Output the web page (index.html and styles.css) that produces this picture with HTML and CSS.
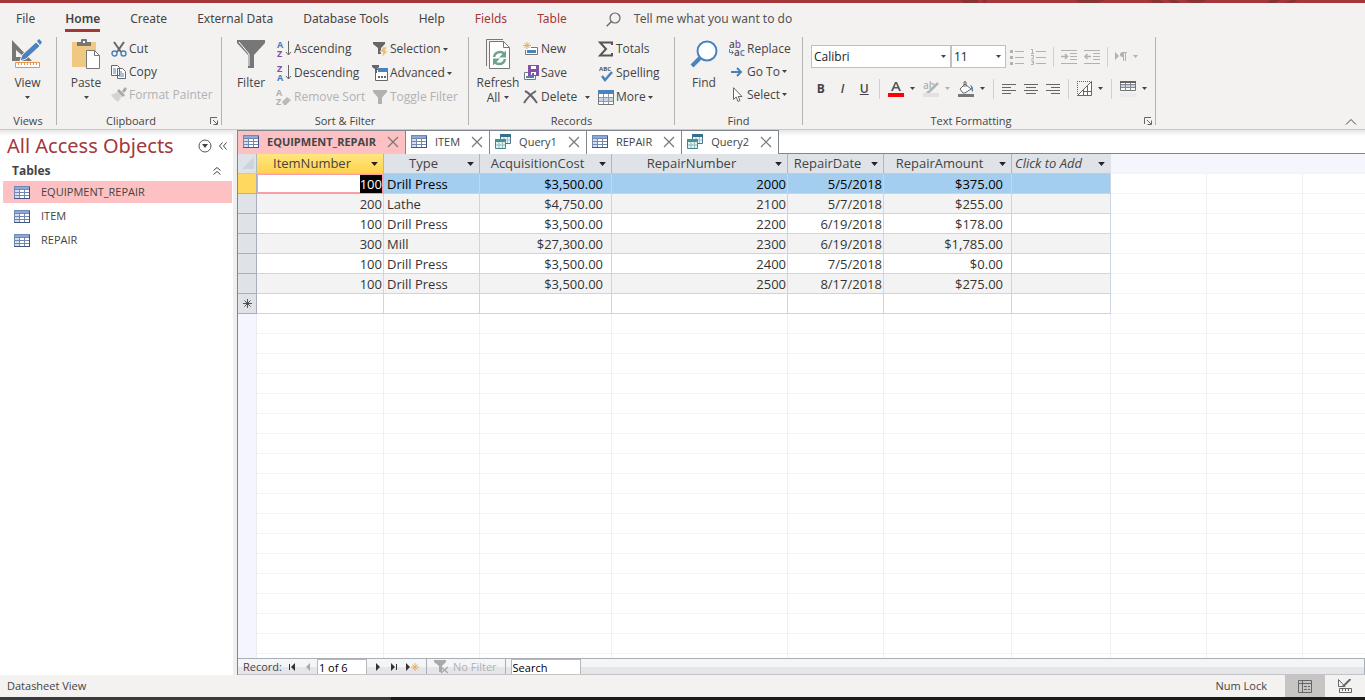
FILE: index.html
```html
<!DOCTYPE html>
<html lang="en">
<head>
    <meta charset="UTF-8">
    <meta name="viewport" content="width=device-width, initial-scale=1.0">
    <title>EQUIPMENT_REPAIR</title>
    <link rel="stylesheet" href="styles.css">
</head>
<body>
    <!-- Shared icons -->
    <svg class="sprite" aria-hidden="true">
        <symbol id="caret" viewBox="0 0 5 3"><path d="M0 0h5L2.500 3z" fill="currentColor"/></symbol>
        <symbol id="close" viewBox="0 0 12 12"><path d="M1 1l10 10M11 1L1 11" stroke="#777" stroke-width="1.200" fill="none"/></symbol>
        <symbol id="launcher" viewBox="0 0 8 8"><path d="M.5 7V.5H7M3 3l4 4M7.500 3.500v4h-4" stroke="#666" fill="none"/></symbol>
        <symbol id="sheet" viewBox="0 0 16 13">
            <path d="M0 0h16v13H0z" fill="#7288b3"/>
            <path d="M1 1h14v2H1z" fill="#8ea8da"/>
            <path d="M1 4h4v2H1zM1 7h4v2H1zM1 10h4v2H1z" fill="#d3def2"/>
            <path d="M6 4h4v2H6zM11 4h4v2h-4zM6 7h4v2H6zM11 7h4v2h-4zM6 10h4v2H6zM11 10h4v2h-4z" fill="#fff"/>
            <path d="M0 12.500h16M15.500 1v12" stroke="#3f5680"/>
        </symbol>
        <symbol id="query" viewBox="0 0 16 15">
            <path d="M5.500.5h10v9h-10z" fill="#eef6f8" stroke="#4b7590"/>
            <path d="M5 0h11v3H5z" fill="#39708b"/>
            <path d="M9 3v6M12.500 3v6M6 6h9" stroke="#a8c3cf"/>
            <path d="M.5 5.500h10v9H.5z" fill="#e3f1f0" stroke="#4b8290"/>
            <path d="M0 5h11v3H0z" fill="#4a9292"/>
            <path d="M4 8v6M7.500 8v6M1 11h9" stroke="#8dbdbd"/>
        </symbol>
        <symbol id="funnel" viewBox="0 0 14 14"><path d="M0 0h14v2L9 7.500V14H5V7.500L0 2z" fill="currentColor"/></symbol>
    </svg>

    <div class="title-strip">
        <svg width="470" height="3" viewBox="0 0 470 3"><path d="M0 0h12l4 3H4zM95 0h18v3H99zM118 0h3v3h-3zM210 0h30l-8 3h-16zM285 0h10l4 3h-10zM303 0h8l4 3h-8zM320 0h22l-6 3h-10zM405 0h10l-5 3h-8zM425 0h8l-5 3h-8z" transform="translate(-30)" fill="#883336"/></svg>
    </div>

    <header class="ribbon">
        <nav class="ribbon-tabs">
            <a href="#">File</a>
            <a href="#" class="selected">Home</a>
            <a href="#">Create</a>
            <a href="#">External Data</a>
            <a href="#">Database Tools</a>
            <a href="#">Help</a>
            <a href="#" class="context">Fields</a>
            <a href="#" class="context">Table</a>
            <button class="tell-me">
                <svg width="15" height="15" viewBox="0 0 15 15"><circle cx="9" cy="6" r="5" fill="none" stroke="#666" stroke-width="1.200"/><path d="M5.500 9.500L.7 14.300" stroke="#666" stroke-width="1.400"/></svg>
                Tell me what you want to do
            </button>
        </nav>

        <div class="ribbon-groups">
            <section class="group views">
                <div class="group-body">
                    <button class="big">
                        <svg width="31" height="30" viewBox="0 0 31 30">
                            <path d="M0 1v21h20zM4 11l8 7H4z" fill="#777" fill-rule="evenodd"/>
                            <path d="M8 22l2-6L24 3l4 4-14 13z" fill="#4a82bd" stroke="#f3f2f1"/>
                            <path d="M25 2l2-2 3 3-2 3z" fill="#4a82bd"/>
                            <path d="M3.500 23.500h24v5h-24z" fill="#fff" stroke="#e59550"/>
                            <path d="M6.500 24v2M9.500 24v2M12.500 24v2M15.500 24v2M18.500 24v2M21.500 24v2M24.500 24v2" stroke="#e59550"/>
                        </svg>
                        <span>View</span>
                        <svg class="caret"><use href="#caret"/></svg>
                    </button>
                </div>
                <div class="group-name">Views</div>
            </section>

            <section class="group clipboard">
                <div class="group-body">
                    <button class="big">
                        <svg width="28" height="30" viewBox="0 0 28 30">
                            <path d="M0 3h24v25H0z" fill="#efc981"/>
                            <path d="M5 7V3h4V1q0-1 1-1h4q1 0 1 1v2h4v4z" fill="#777"/>
                            <path d="M11 2h2v2h-2z" fill="#fff"/>
                            <path d="M14.500 11.500h8l5 5v13h-13z" fill="#fff" stroke="#777"/>
                            <path d="M22.500 11.500v5h5" fill="none" stroke="#777"/>
                        </svg>
                        <span>Paste</span>
                        <svg class="caret"><use href="#caret"/></svg>
                    </button>
                    <div class="column">
                        <button><svg width="16" height="16" viewBox="0 0 16 16"><path d="M3 1l7 10M13 1L6 11" stroke="#666" stroke-width="2"/><circle cx="3.500" cy="12.500" r="2.500" fill="none" stroke="#4a82bd" stroke-width="1.400"/><circle cx="12.500" cy="12.500" r="2.500" fill="none" stroke="#4a82bd" stroke-width="1.400"/></svg>Cut</button>
                        <button><svg width="16" height="16" viewBox="0 0 16 16"><path d="M.5 1.500h6l2 2v8h-8zM6.500 4.500h5l3 3v7h-8z" fill="#fff" stroke="#666"/><path d="M2 5h3M2 7h3M2 9h3M8 8h3M8 10h5M8 12h5" stroke="#4a82bd"/></svg>Copy</button>
                        <button disabled><svg width="16" height="16" viewBox="0 0 16 16"><path d="M0 8l7-3 4 4-4 6q-4-2-7-7z" fill="#d5d3d3"/><path d="M6 4l2-2 6 6-2 2zM11 4l3-4 2 2-3 4z" fill="#a9a8a8"/></svg>Format Painter</button>
                    </div>
                </div>
                <div class="group-name">Clipboard</div>
                <button class="launcher" aria-label="Clipboard options"><svg width="8" height="8"><use href="#launcher"/></svg></button>
            </section>

            <section class="group sort">
                <div class="group-body">
                    <button class="big">
                        <svg width="28" height="30" viewBox="0 0 28 30"><path d="M0 1h28v3L17 16v13h-6V16L0 4z" fill="#777"/><path d="M2 3l10 12v12" fill="none" stroke="#fff"/></svg>
                        <span>Filter</span>
                    </button>
                    <div class="column">
                        <button><svg width="16" height="18" viewBox="0 0 16 18"><text x="1" y="8" class="az blue">A</text><text x="1" y="17" class="az purple">Z</text><path d="M12.500 1v14M10 12l2.500 3 2.500-3" fill="none" stroke="#666"/></svg>Ascending</button>
                        <button><svg width="16" height="18" viewBox="0 0 16 18"><text x="1" y="8" class="az purple">Z</text><text x="1" y="17" class="az blue">A</text><path d="M12.500 1v14M10 12l2.500 3 2.500-3" fill="none" stroke="#666"/></svg>Descending</button>
                        <button disabled><svg width="16" height="18" viewBox="0 0 16 18"><text x="0" y="8" class="az gray">A</text><text x="0" y="17" class="az gray">Z</text><path d="M6 14l5-5 4 3-5 5H8z" fill="#bbb9bb"/></svg>Remove Sort</button>
                    </div>
                    <div class="column">
                        <button><svg width="16" height="16" viewBox="0 0 16 16"><path d="M1 1h12v2L9 7v6H6V7L1 3z" fill="#666"/><path d="M11 6h4l-2 4h3l-6 6 1-5H8z" fill="#edbd70" stroke="#f3f2f1" stroke-width=".5"/></svg>Selection<svg class="caret"><use href="#caret"/></svg></button>
                        <button><svg width="16" height="16" viewBox="0 0 16 16"><path d="M3.500 4.500h12v11h-12z" fill="#fff" stroke="#666"/><path d="M6 3h10v4H6z" fill="#4a82bd"/><path d="M0 0h7v2L5 4v4H3V4L0 2z" fill="#666"/><path d="M6 11h2v2H6zM9 11h2v2H9zM12 11h2v2h-2z" fill="#666"/></svg>Advanced<svg class="caret"><use href="#caret"/></svg></button>
                        <button disabled><svg width="16" height="14" viewBox="0 0 14 14"><use href="#funnel"/></svg>Toggle Filter</button>
                    </div>
                </div>
                <div class="group-name">Sort &amp; Filter</div>
            </section>

            <section class="group records">
                <div class="group-body">
                    <button class="big">
                        <svg width="24" height="30" viewBox="0 0 24 30">
                            <path d="M.5 27V.5H17" fill="none" stroke="#777"/>
                            <path d="M3.500 2.500h14l6 6v21h-20z" fill="#fff" stroke="#777"/>
                            <path d="M17.500 2.500v6h6" fill="none" stroke="#777"/>
                            <path d="M8 18q1-5 6-5 3 0 4 2M19 20q-1 5-6 5-3 0-4-2" fill="none" stroke="#6fa48c" stroke-width="2.500"/>
                            <path d="M20 11.500v7h-7zM7 26.500v-7h7z" fill="#6fa48c"/>
                        </svg>
                        <span>Refresh</span>
                        <span class="second">All<svg class="caret"><use href="#caret"/></svg></span>
                    </button>
                    <div class="column">
                        <button><svg width="16" height="14" viewBox="0 0 16 14"><path d="M8 5.500h6.500v7H2.500V8" fill="#fff" stroke="#777"/><path d="M4 8h9v3H4z" fill="#4a82bd"/><path d="M4 0v7M0 3.500h8M1.500 1l5 5M6.500 1l-5 5" stroke="#e6ad5c"/></svg>New</button>
                        <button><svg width="16" height="16" viewBox="0 0 16 16"><path d="M1.500 7.500h11v7h-11z" fill="#fff" stroke="#777"/><path d="M3 11h8v2H3z" fill="#4a82bd"/><path d="M5 0h11v11H5z" fill="#8452a5"/><path d="M8 1h5v3H8zM8 7h5v3H8z" fill="#fff"/><path d="M9 8h2v2H9z" fill="#8452a5"/></svg>Save</button>
                        <div class="split">
                            <button><svg width="16" height="14" viewBox="0 0 16 14"><path d="M2 1q6 3 12 12M13 1Q6 5 1 13" stroke="#666" stroke-width="2" fill="none"/></svg>Delete</button>
                            <button aria-label="Delete options"><svg class="caret"><use href="#caret"/></svg></button>
                        </div>
                    </div>
                    <div class="column">
                        <button><svg width="16" height="16" viewBox="0 0 16 16"><path d="M14 4V1.500H2L8 8l-6 6.500h12V12" fill="none" stroke="#555" stroke-width="2"/></svg>Totals</button>
                        <button><svg width="16" height="18" viewBox="0 0 16 18"><text x="1" y="7" class="abc">ABC</text><path d="M4 12l3 4 7-8" fill="none" stroke="#4a82bd" stroke-width="2.500"/></svg>Spelling</button>
                        <button><svg width="16" height="15" viewBox="0 0 16 15"><path d="M.5.5h15v14H.5z" fill="#fff" stroke="#777"/><path d="M0 0h16v4H0z" fill="#4a82bd"/><path d="M1 7h14v4H1z" fill="#c3d5ea"/><path d="M5.500 4v10M10.500 4v10M1 7.500h14M1 11.500h14" stroke="#999"/></svg>More<svg class="caret"><use href="#caret"/></svg></button>
                    </div>
                </div>
                <div class="group-name">Records</div>
            </section>

            <section class="group find">
                <div class="group-body">
                    <button class="big">
                        <svg width="28" height="30" viewBox="0 0 28 30"><circle cx="17" cy="12" r="9.500" fill="#fff" stroke="#4a82bd" stroke-width="2"/><path d="M10 19l-8 8" stroke="#4a82bd" stroke-width="4"/></svg>
                        <span>Find</span>
                    </button>
                    <div class="column">
                        <button><svg width="16" height="18" viewBox="0 0 16 18"><text x="0" y="8" class="ab">a<tspan fill="#8452a5">b</tspan></text><text x="5" y="16" class="ab">a<tspan fill="#4a82bd">c</tspan></text><path d="M.5 9v3.500H4M2.500 10.500l2 2-2 2" fill="none" stroke="#4a82bd"/></svg>Replace</button>
                        <button><svg width="16" height="12" viewBox="0 0 16 12"><path d="M2 6h10M8 2l4 4-4 4" fill="none" stroke="#4a82bd" stroke-width="2"/></svg>Go To<svg class="caret"><use href="#caret"/></svg></button>
                        <button><svg width="16" height="16" viewBox="0 0 16 16"><path d="M4.500.7v11.800l2.700-2.500 1.800 4.500 2-1-1.800-4H13z" fill="#fff" stroke="#666"/></svg>Select<svg class="caret"><use href="#caret"/></svg></button>
                    </div>
                </div>
                <div class="group-name">Find</div>
            </section>

            <section class="group formatting">
                <div class="group-body">
                    <div class="tools">
                        <div class="select-box font-name"><select aria-label="Font"><option>Calibri</option></select><svg class="caret"><use href="#caret"/></svg></div>
                        <div class="select-box font-size"><select aria-label="Font size"><option>11</option></select><svg class="caret"><use href="#caret"/></svg></div>
                        <button class="tool" disabled aria-label="Bullets"><svg width="14" height="16" viewBox="0 0 14 16"><path d="M5 2.500h9M5 8.500h9M5 14.500h9" stroke="currentColor"/><path d="M0 1h3v3H0zM0 7h3v3H0zM0 13h3v3H0z" fill="currentColor"/></svg></button>
                        <button class="tool" disabled aria-label="Numbering"><svg width="15" height="16" viewBox="0 0 15 16"><path d="M5 2.500h10M5 8.500h10M5 14.500h10" stroke="currentColor"/><path d="M0 .5h1.500v3.500M0 4.500h3M0 6.500h2.500v1.500L.5 10H3M0 12h2.500v3.500H0M1 13.500h1.500" fill="none" stroke="currentColor"/></svg></button>
                        <span class="bar"></span>
                        <button class="tool" disabled aria-label="Increase indent"><svg width="16" height="14" viewBox="0 0 16 14"><path d="M0 .5h16M9 3.500h7M9 6.500h7M9 9.500h7M0 13.500h16" stroke="currentColor"/><path d="M0 6.500h6M4 4l2.500 2.500L4 9" fill="none" stroke="currentColor" stroke-width="1.500"/></svg></button>
                        <button class="tool" disabled aria-label="Decrease indent"><svg width="16" height="14" viewBox="0 0 16 14"><path d="M0 .5h16M9 3.500h7M9 6.500h7M9 9.500h7M0 13.500h16" stroke="currentColor"/><path d="M7 6.500H1M3.500 4L1 6.500 3.500 9" fill="none" stroke="currentColor" stroke-width="1.500"/></svg></button>
                        <span class="bar"></span>
                        <button class="tool" disabled aria-label="Text direction"><svg width="12" height="9" viewBox="0 0 12 9"><path d="M0 0l4 4-4 4zM12 0v1h-1v8h-1V1H9v8H8V5Q5 5 5 2.500 5 0 8 0z" fill="currentColor"/></svg><svg class="caret"><use href="#caret"/></svg></button>
                    </div>
                    <div class="tools">
                        <button class="tool letter bold" aria-label="Bold">B</button>
                        <button class="tool letter italic" aria-label="Italic">I</button>
                        <button class="tool letter underline" aria-label="Underline">U</button>
                        <span class="bar"></span>
                        <button class="tool" aria-label="Font color"><svg width="16" height="16" viewBox="0 0 16 16"><path d="M3 10L7 1h2l4 9h-2l-1-2.500H6L5 10zM6.600 6h2.800L8 2.600z" fill="#555" fill-rule="evenodd"/><path d="M0 12h16v4H0z" fill="#f00"/></svg><svg class="caret"><use href="#caret"/></svg></button>
                        <button class="tool" disabled aria-label="Highlight"><svg width="16" height="16" viewBox="0 0 16 16"><text x="0" y="8" class="ab gray">ab</text><path d="M15 2l-8 8-3 2" stroke="#b5b3b5" stroke-width="2.500" fill="none"/><path d="M0 12h16v4H0z" fill="#e2e0e3"/></svg><svg class="caret"><use href="#caret"/></svg></button>
                        <button class="tool" aria-label="Background color"><svg width="16" height="16" viewBox="0 0 16 16"><path d="M2 8l5-5 6 5-6 4H5z" fill="#fff" stroke="#666"/><path d="M6 6V1q1-1 2 0v5" fill="none" stroke="#666"/><path d="M12 4q4 1 3 7-2-1-2-5z" fill="#4a82bd"/><path d="M0 13h16v3H0z" fill="#777"/></svg><svg class="caret"><use href="#caret"/></svg></button>
                        <span class="bar"></span>
                        <button class="tool" aria-label="Align left"><svg width="14" height="12" viewBox="0 0 14 12"><path d="M0 1.500h14M0 4.500h9M0 7.500h14M0 10.500h9" stroke="#666"/></svg></button>
                        <button class="tool" aria-label="Center"><svg width="14" height="12" viewBox="0 0 14 12"><path d="M0 1.500h14M2 4.500h10M0 7.500h14M2 10.500h10" stroke="#666"/></svg></button>
                        <button class="tool" aria-label="Align right"><svg width="14" height="12" viewBox="0 0 14 12"><path d="M0 1.500h14M5 4.500h9M0 7.500h14M5 10.500h9" stroke="#666"/></svg></button>
                        <span class="bar"></span>
                        <button class="tool" aria-label="Gridlines"><svg width="15" height="15" viewBox="0 0 15 15"><path d="M0 .5h15M.5 0v15" stroke="#666" stroke-dasharray="1 1"/><path d="M0 15L15 0v15z" fill="#fff"/><path d="M.5 14.500L14.500.5v14zM10.500 4.500v10M6.500 8.500v6M6 10.500h8" fill="none" stroke="#666"/></svg><svg class="caret"><use href="#caret"/></svg></button>
                        <span class="bar"></span>
                        <button class="tool" aria-label="Alternate row color"><svg width="16" height="16" viewBox="0 0 16 16"><path d="M.5.5h15v9H.5z" fill="#fff" stroke="#777"/><path d="M1 3h14v3H1z" fill="#c3d5ea"/><path d="M5.500 0v9M10.500 0v9M1 3.500h14M1 6.500h14" stroke="#888"/><path d="M0 0h16v2H0z" fill="#666"/><path d="M0 12h16v4H0z" fill="#ebebef"/></svg><svg class="caret"><use href="#caret"/></svg></button>
                    </div>
                </div>
                <div class="group-name">Text Formatting</div>
                <button class="launcher" aria-label="Text formatting options"><svg width="8" height="8"><use href="#launcher"/></svg></button>
            </section>

            <button class="collapse" aria-label="Collapse the ribbon"><svg width="12" height="6" viewBox="0 0 12 6"><path d="M1 5.500l5-5 5 5" fill="none" stroke="#444"/></svg></button>
        </div>
    </header>

    <main class="workspace">
        <!-- Navigation pane -->
        <aside class="nav-pane">
            <div class="nav-head">
                <h1>All Access Objects</h1>
                <button aria-label="Filter objects"><svg width="14" height="14" viewBox="0 0 14 14"><circle cx="7" cy="7" r="6" fill="none" stroke="#555"/><path d="M4 5h6L7 9z" fill="#444"/></svg></button>
                <button aria-label="Close pane"><svg width="8" height="8" viewBox="0 0 8 8"><path d="M3.500.5L.5 4l3 3.500M7.500.5l-3 3.500 3 3.500" fill="none" stroke="#444"/></svg></button>
            </div>
            <button class="nav-group">Tables<svg width="8" height="8" viewBox="0 0 8 8"><path d="M.5 3.500L4 .5l3.500 3M.5 7.500L4 4.500l3.500 3" fill="none" stroke="#444"/></svg></button>
            <a href="#" class="nav-item selected"><svg width="16" height="13"><use href="#sheet"/></svg>EQUIPMENT_REPAIR</a>
            <a href="#" class="nav-item"><svg width="16" height="13"><use href="#sheet"/></svg>ITEM</a>
            <a href="#" class="nav-item"><svg width="16" height="13"><use href="#sheet"/></svg>REPAIR</a>
        </aside>

        <section class="document">
            <div class="doc-tabs">
                <div class="doc-tab active"><a href="#"><svg width="16" height="13"><use href="#sheet"/></svg>EQUIPMENT_REPAIR</a><button aria-label="Close EQUIPMENT_REPAIR"><svg width="12" height="12"><use href="#close"/></svg></button></div>
                <div class="doc-tab"><a href="#"><svg width="16" height="13"><use href="#sheet"/></svg>ITEM</a><button aria-label="Close ITEM"><svg width="12" height="12"><use href="#close"/></svg></button></div>
                <div class="doc-tab"><a href="#"><svg width="16" height="15"><use href="#query"/></svg>Query1</a><button aria-label="Close Query1"><svg width="12" height="12"><use href="#close"/></svg></button></div>
                <div class="doc-tab"><a href="#"><svg width="16" height="13"><use href="#sheet"/></svg>REPAIR</a><button aria-label="Close REPAIR"><svg width="12" height="12"><use href="#close"/></svg></button></div>
                <div class="doc-tab"><a href="#"><svg width="16" height="15"><use href="#query"/></svg>Query2</a><button aria-label="Close Query2"><svg width="12" height="12"><use href="#close"/></svg></button></div>
                <div class="tab-rest"></div>
            </div>

            <div class="datasheet">
                <table>
                    <colgroup>
                        <col class="c-sel"><col class="c-item"><col class="c-type"><col class="c-cost"><col class="c-num"><col class="c-date"><col class="c-amount"><col class="c-add">
                    </colgroup>
                    <thead>
                        <tr>
                            <th class="corner"><svg width="12" height="12" viewBox="0 0 12 12"><path d="M0 12L12 0v12z" fill="#cdd3dc"/></svg></th>
                            <th class="current"><button><span>ItemNumber</span><svg class="drop"><use href="#caret"/></svg></button></th>
                            <th><button><span>Type</span><svg class="drop"><use href="#caret"/></svg></button></th>
                            <th><button><span>AcquisitionCost</span><svg class="drop"><use href="#caret"/></svg></button></th>
                            <th><button><span>RepairNumber</span><svg class="drop"><use href="#caret"/></svg></button></th>
                            <th><button><span>RepairDate</span><svg class="drop"><use href="#caret"/></svg></button></th>
                            <th><button><span>RepairAmount</span><svg class="drop"><use href="#caret"/></svg></button></th>
                            <th class="add"><button><span>Click to Add</span><svg class="drop"><use href="#caret"/></svg></button></th>
                        </tr>
                    </thead>
                    <tbody>
                        <tr class="active"><td class="sel"></td><td class="focus"><mark>100</mark></td><td class="text">Drill Press</td><td class="money">$3,500.00</td><td>2000</td><td>5/5/2018</td><td class="money">$375.00</td><td></td></tr>
                        <tr><td class="sel"></td><td>200</td><td class="text">Lathe</td><td class="money">$4,750.00</td><td>2100</td><td>5/7/2018</td><td class="money">$255.00</td><td></td></tr>
                        <tr><td class="sel"></td><td>100</td><td class="text">Drill Press</td><td class="money">$3,500.00</td><td>2200</td><td>6/19/2018</td><td class="money">$178.00</td><td></td></tr>
                        <tr><td class="sel"></td><td>300</td><td class="text">Mill</td><td class="money">$27,300.00</td><td>2300</td><td>6/19/2018</td><td class="money">$1,785.00</td><td></td></tr>
                        <tr><td class="sel"></td><td>100</td><td class="text">Drill Press</td><td class="money">$3,500.00</td><td>2400</td><td>7/5/2018</td><td class="money">$0.00</td><td></td></tr>
                        <tr><td class="sel"></td><td>100</td><td class="text">Drill Press</td><td class="money">$3,500.00</td><td>2500</td><td>8/17/2018</td><td class="money">$275.00</td><td></td></tr>
                        <tr class="new"><td class="sel"><svg width="9" height="9" viewBox="0 0 9 9"><path d="M4.500 0v9M0 4.500h9M1.500 1.500l6 6M7.500 1.500l-6 6" stroke="#444" stroke-width=".9"/></svg></td><td></td><td></td><td></td><td></td><td></td><td></td><td></td></tr>
                    </tbody>
                </table>
            </div>

            <div class="record-bar">
                <label for="recordNumber">Record:</label>
                <button aria-label="First record"><svg width="8" height="8" viewBox="0 0 8 8"><path d="M0 1h1v6H0zM6 0v8L2 4z" fill="#333"/></svg></button>
                <button aria-label="Previous record"><svg width="8" height="8" viewBox="0 0 8 8"><path d="M6 0v8L2 4z" fill="#aaa"/></svg></button>
                <input type="text" id="recordNumber" class="record-number" value="1 of 6">
                <button aria-label="Next record"><svg width="8" height="8" viewBox="0 0 8 8"><path d="M2 0v8l4-4z" fill="#333"/></svg></button>
                <button aria-label="Last record"><svg width="8" height="8" viewBox="0 0 8 8"><path d="M7 1h1v6H7zM2 0v8l4-4z" fill="#333"/></svg></button>
                <button class="new-record" aria-label="New record"><svg width="13" height="8" viewBox="0 0 13 8"><path d="M0 0v8l4-4z" fill="#333"/><path d="M9 0v8M5 4h8M6.500 1.500l5 5M11.500 1.500l-5 5" stroke="#e6ad5c"/></svg></button>
                <button class="no-filter" disabled><svg width="16" height="15" viewBox="0 0 16 15"><path d="M0 1h12v2L8 7v6H5V7L0 3z" fill="#aaa"/><path d="M7 8l7 6M14 8l-7 6" stroke="#aaa" stroke-width="1.500"/></svg>No Filter</button>
                <input type="text" class="search" value="Search" aria-label="Search records">
            </div>
        </section>
    </main>

    <footer class="status-bar">
        <span>Datasheet View</span>
        <span class="num-lock">Num Lock</span>
        <button class="on" aria-label="Datasheet View"><svg width="14" height="13" viewBox="0 0 14 13"><path d="M.5.5h13v12H.5zM0 3.500h14M4.500 1v11M6 6.500h3M10 6.500h2M6 9.500h3M10 9.500h2" fill="none" stroke="#666"/></svg></button>
        <button aria-label="Design View"><svg width="15" height="14" viewBox="0 0 15 14"><path d="M.5.5v7H7z" fill="none" stroke="#666"/><path d="M5 7.500L12.500 0" stroke="#666" stroke-width="2"/><path d="M1.500 9.500h12v4h-12zM4.500 10v2M7.500 10v2M10.500 10v2" fill="none" stroke="#666"/></svg></button>
    </footer>
    <div class="desktop-edge"></div>
</body>
</html>
```
FILE: styles.css
```css
* {
    box-sizing: border-box;
}

body {
    margin: 0;
    height: 100vh;
    display: flex;
    flex-direction: column;
    overflow: hidden;
    background: #fff;
    color: #444;
    font-family: "Open Sans", "Noto Sans", sans-serif;
    font-size: 12px;
    line-height: 16px;
}

button,
input,
select {
    font: inherit;
    color: inherit;
    margin: 0;
    padding: 0;
    border: none;
    background: none;
}

button {
    display: flex;
    align-items: center;
    white-space: nowrap;
}

button:disabled {
    color: #b1b1b1;
}

a {
    color: inherit;
    text-decoration: none;
}

svg {
    flex: none;
    display: block;
}

.sprite {
    display: none;
}

.caret {
    width: 5px;
    height: 3px;
}

/* Lettering inside icons */
.az,
.ab,
.abc {
    font-size: 9px;
    font-weight: 700;
    fill: #555;
}

.ab {
    font-size: 10px;
    font-weight: 600;
}

.abc {
    font-size: 6px;
}

.blue {
    fill: #4a82bd;
}

.purple {
    fill: #8452a5;
}

.gray {
    fill: #b1b1b1;
}

/* Ribbon */
.title-strip {
    flex: none;
    height: 3px;
    background: #a4373a;
    display: flex;
    justify-content: flex-end;
}

.ribbon {
    flex: none;
    background: #f3f2f1;
    border-bottom: 1px solid #c8c8c8;
}

.ribbon-tabs {
    display: flex;
    align-items: center;
    height: 32px;
    padding-left: 1px;
    font-family: "Noto Sans", "Open Sans", sans-serif;
}

.ribbon-tabs a {
    padding: 5px 0 2px;
    margin: 0 15px;
    border-bottom: 3px solid transparent;
}

.ribbon-tabs .selected {
    font-weight: 600;
    border-color: #a4373a;
}

.ribbon-tabs .context {
    color: #a4373a;
}

.tell-me {
    margin-left: 24px;
    gap: 13px;
    color: #555;
}

.ribbon-groups {
    display: flex;
    height: 94px;
    padding: 2px 0 4px;
}

.group {
    position: relative;
    display: flex;
    flex-direction: column;
    justify-content: space-between;
    border-right: 1px solid #b3b2b1;
}

.group-body {
    display: flex;
}

.group-name {
    text-align: center;
    line-height: 8px;
    font-size: 11px;
}

.clipboard .group-name,
.formatting .group-name {
    padding-right: 16px;
}

.views {
    width: 57px;
}

.clipboard {
    width: 165px;
}

.sort {
    width: 247px;
}

.records {
    width: 206px;
}

.find {
    width: 128px;
}

.formatting {
    width: 353px;
}

.big {
    flex-direction: column;
    width: 58px;
    padding-top: 2px;
    line-height: 15px;
}

.views .big {
    width: 55px;
}

.big > svg:first-child {
    margin-bottom: 6px;
}

.big > .caret {
    margin-top: 6px;
}

.second {
    display: flex;
    align-items: center;
    gap: 4px;
}

.column {
    margin-left: -4px;
}

.column button {
    gap: 2px;
    height: 23px;
}

.sort .column button,
.records .column button {
    height: 24px;
}

.sort .column:nth-child(2) {
    width: 100px;
}

.records .column:nth-child(2) {
    width: 79px;
}

.split {
    display: flex;
    gap: 8px;
}

.launcher {
    position: absolute;
    right: 3px;
    bottom: 0;
}

.formatting .group-body {
    flex-direction: column;
    gap: 9px;
    padding: 8px 8px 0;
}

.tools {
    display: flex;
    align-items: center;
    height: 23px;
}

.tool {
    gap: 6px;
    margin-left: 8px;
}

.bar {
    width: 1px;
    height: 20px;
    margin-left: 8px;
    background: #d0cfce;
}

.select-box ~ .tool,
.select-box ~ .bar {
    margin-left: 7px;
}

.select-box + .tool {
    margin-left: 4px;
}

.letter {
    width: 14px;
    justify-content: center;
}

.letter:first-child {
    margin-left: 3px;
}

.bold {
    font-weight: 700;
}

.italic {
    font-style: italic;
    font-weight: 600;
}

.underline {
    font-weight: 600;
    text-decoration: underline;
}

.select-box {
    position: relative;
    height: 23px;
}

.select-box select {
    appearance: none;
    width: 100%;
    height: 100%;
    padding-left: 2px;
    border: 1px solid #c1c0bf;
    background: #fff;
    color: #222;
}

.select-box .caret {
    position: absolute;
    right: 5px;
    top: 10px;
}

.font-name {
    width: 140px;
}

.font-size {
    width: 55px;
}

.collapse {
    align-self: flex-end;
    margin: 0 8px 0 auto;
}

/* Main area */
.workspace {
    flex: 1;
    min-height: 0;
    display: flex;
    background: linear-gradient(#e6e6e6, #fff 6px);
}

.nav-pane {
    flex: none;
    width: 237px;
    padding-left: 3px;
    border-right: 4px solid #efeff0;
}

.nav-head {
    display: flex;
    align-items: center;
    height: 32px;
    padding: 0 6px 0 4px;
    gap: 7px;
}

.nav-head h1 {
    flex: 1;
    margin: 0;
    font-family: "Noto Sans", "Open Sans", sans-serif;
    font-size: 20px;
    line-height: 26px;
    font-weight: 400;
    color: #a4373a;
    white-space: nowrap;
}

.nav-group {
    justify-content: space-between;
    width: 100%;
    height: 18px;
    padding: 0 12px 0 9px;
    font-size: 12px;
    font-weight: 700;
}

.nav-item {
    display: flex;
    align-items: center;
    gap: 11px;
    height: 22px;
    margin: 1px 1px 2px 0;
    padding-left: 11px;
    font-size: 11px;
}

.nav-item.selected {
    background: #fdc1c3;
}

.document {
    flex: 1;
    min-width: 0;
    display: flex;
    flex-direction: column;
    border-left: 1px solid #7f8690;
}

.doc-tabs {
    flex: none;
    display: flex;
    height: 24px;
}

.doc-tab {
    display: flex;
    align-items: center;
    gap: 11px;
    padding: 0 6px 2px 5px;
    background: #fff;
    border-top: 1px solid #7f8690;
    border-right: 1px solid #7f8690;
    font-size: 11px;
}

.doc-tab a {
    display: flex;
    align-items: center;
    gap: 8px;
}

.doc-tab.active {
    background: #fdc1c3;
    font-weight: 700;
}

.tab-rest {
    flex: 1;
    border-bottom: 1px solid #7f8690;
}

/* Datasheet */
.datasheet {
    flex: 1;
    min-height: 0;
    overflow: hidden;
    background:
        linear-gradient(#f5f6fd, #f5f6fd) 0 0 / 100% 19px no-repeat,
        linear-gradient(#f5f6fd, #f5f6fd) 0 0 / 18px 100% no-repeat,
        linear-gradient(#ececf0, #ececf0) 18px 0 / 1px 100% no-repeat,
        linear-gradient(#f0f0f3, #f0f0f3) 145px 0 / 1px 100% no-repeat,
        linear-gradient(#f0f0f3, #f0f0f3) 241px 0 / 1px 100% no-repeat,
        linear-gradient(#f0f0f3, #f0f0f3) 373px 0 / 1px 100% no-repeat,
        linear-gradient(#f0f0f3, #f0f0f3) 549px 0 / 1px 100% no-repeat,
        linear-gradient(#f0f0f3, #f0f0f3) 645px 0 / 1px 100% no-repeat,
        linear-gradient(#f0f0f3, #f0f0f3) 773px 0 / 1px 100% no-repeat,
        linear-gradient(#f0f0f3, #f0f0f3) 872px 0 / 1px 100% no-repeat,
        linear-gradient(#f0f0f3, #f0f0f3) 968px 0 / 1px 100% no-repeat,
        linear-gradient(#f0f0f3, #f0f0f3) 1064px 0 / 1px 100% no-repeat,
        repeating-linear-gradient(#fff 0 19px, #f3f3f5 19px 20px);
}

table {
    table-layout: fixed;
    width: 873px;
    border-collapse: separate;
    border-spacing: 0;
    font-size: 13px;
    line-height: 18px;
}

.c-sel {
    width: 19px;
}

.c-item {
    width: 127px;
}

.c-type,
.c-date {
    width: 96px;
}

.c-cost {
    width: 132px;
}

.c-num {
    width: 176px;
}

.c-amount {
    width: 128px;
}

.c-add {
    width: 99px;
}

th {
    height: 20px;
    padding: 0;
    vertical-align: top;
    background: #dfe3e8;
    border-right: 1px solid #b0b7c1;
    border-bottom: 1px solid #c3cad6;
    font-weight: 400;
}

th button {
    width: 100%;
    height: 18px;
    padding-right: 5px;
}

th span {
    flex: 1;
    padding-right: 4px;
    text-align: center;
}

.drop {
    width: 7px;
    height: 4px;
    margin-top: 2px;
    color: #222;
}

.corner svg {
    margin: 3px 0 0 4px;
}

th.current {
    background: linear-gradient(#ffe680, #ffd34f);
}

th.add {
    font-style: italic;
    border-right-color: #dfe3e8;
}

th.add span {
    padding-left: 3px;
    text-align: left;
}

td {
    height: 20px;
    padding: 0 1px;
    background: #fff;
    border-right: 1px solid #cbd5e3;
    border-bottom: 1px solid #cbd5e3;
    text-align: right;
    color: #333;
}

tbody tr:nth-child(even) td {
    background: #f3f3f3;
}

td.text {
    text-align: left;
    padding-left: 3px;
}

td.money {
    padding-right: 8px;
}

tbody tr .sel,
tbody tr:nth-child(even) .sel {
    background: #dfe3e8;
    border-color: #a9b0bb;
}

tbody tr.active td {
    background: #a4cef0;
    color: #000;
}

tbody tr.active .sel {
    background: #ffd95f;
}

tbody tr.active .focus {
    background: #fff;
    box-shadow: inset 0 0 0 1px #f8a0a5;
    border-color: #f8a0a5;
}

.new .sel svg {
    margin: 0 auto;
}

mark {
    display: inline-block;
    background: #000;
    color: #fff;
}

/* Record navigation */
.record-bar {
    flex: none;
    display: flex;
    align-items: center;
    height: 17px;
    padding-left: 5px;
    background: linear-gradient(#f4f5f7 50%, #e4e6ea 50%);
    border: 1px solid #a9adb5;
    border-left: none;
    border-bottom-color: #c4c4c4;
    font-size: 11px;
    line-height: 15px;
}

.record-bar > button {
    margin-left: 7px;
}

.record-bar input {
    height: 15px;
    padding-left: 1px;
    background: #fff;
    border: 1px solid #b8b8b8;
    border-bottom: none;
    color: #000;
}

.record-bar .record-number {
    width: 50px;
    margin-left: 5px;
}

.record-bar .new-record {
    margin-left: 9px;
}

.record-bar .no-filter {
    gap: 3px;
    padding: 0 8px 0 7px;
    border-left: 1px solid #a9adb5;
    border-right: 1px solid #a9adb5;
}

.record-bar .search {
    width: 70px;
    margin-left: 5px;
}

/* Status bar */
.status-bar {
    flex: none;
    display: flex;
    align-items: center;
    height: 22px;
    padding-left: 7px;
    background: #f3f2f1;
    font-size: 11px;
}

.num-lock {
    margin-left: auto;
    margin-right: 18px;
}

.status-bar button {
    width: 40px;
    height: 22px;
    justify-content: center;
}

.status-bar .on {
    background: #c6c5c4;
}

.desktop-edge {
    flex: none;
    height: 3px;
    background: linear-gradient(90deg, #3a3a3a 391px, #1c1a19 391px);
}
```
